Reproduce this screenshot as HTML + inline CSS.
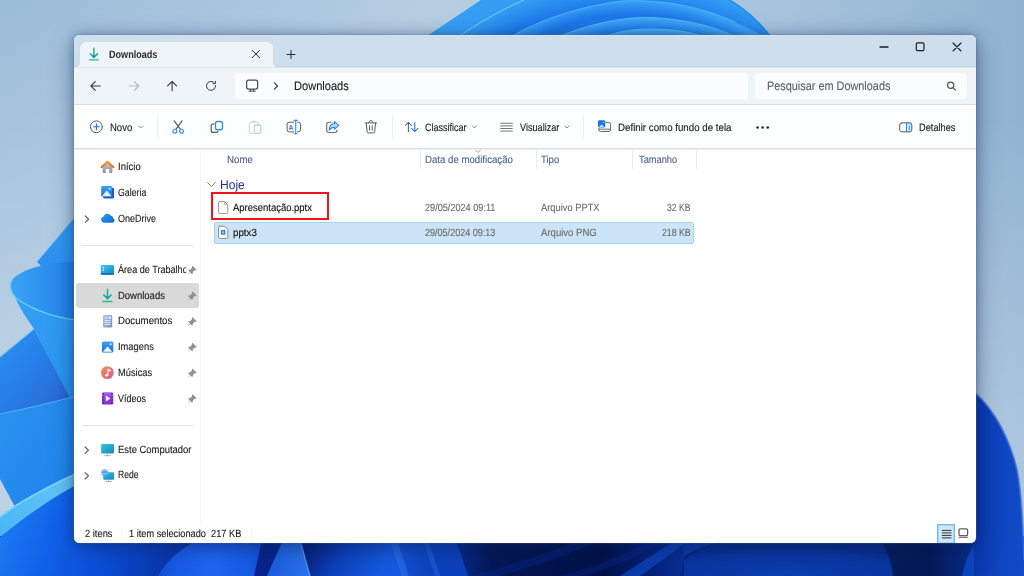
<!DOCTYPE html>
<html lang="pt-BR">
<head>
<meta charset="utf-8">
<title>Downloads</title>
<style>
*{box-sizing:border-box;margin:0;padding:0}
html,body{width:1024px;height:576px;overflow:hidden;background:#a6c3db;font-family:"Liberation Sans",sans-serif;color:#1b1b1b}
#wall{position:absolute;left:0;top:0;width:1024px;height:576px}
#win{position:absolute;left:74px;top:35px;width:902px;height:508px;border-radius:5.5px;background:#fff;overflow:hidden;
 box-shadow:0 0 0 1px rgba(95,110,135,.26),0 7px 26px rgba(15,40,90,.36),0 1px 9px rgba(10,30,80,.28),0 0 16px rgba(20,45,90,.12)}
.a{position:absolute}
.t{position:absolute;white-space:nowrap;line-height:20px;height:20px;-webkit-text-stroke:.11px currentColor;text-rendering:geometricPrecision}
svg.i{position:absolute;overflow:visible}
#titlebar{position:absolute;left:0;top:0;width:902px;height:32px;background:#cedeec;border-top:1px solid #d3e2ef;border-bottom:1px solid #c6d8e8}
#tab{position:absolute;left:6px;top:6.5px;width:193px;height:26px;background:#eff4f9;border-radius:6px 6px 0 0}
#tab:before,#tab:after{content:"";position:absolute;bottom:0.5px;width:4px;height:4px}
#tab:before{left:-4px;background:radial-gradient(circle at 0 0,rgba(239,244,249,0) 3.6px,#eff4f9 4.2px)}
#tab:after{right:-4px;background:radial-gradient(circle at 100% 0,rgba(239,244,249,0) 3.6px,#eff4f9 4.2px)}
#navbar{position:absolute;left:0;top:32px;width:902px;height:38px;background:#eff4f9;border-bottom:1px solid #d5e0ee}
#addr{position:absolute;left:161px;top:38px;width:513px;height:25.5px;background:#fafcfe;border-radius:4px}
#search{position:absolute;left:681px;top:38px;width:212px;height:25.5px;background:#fafcfe;border-radius:4px}
#toolbar{position:absolute;left:0;top:70px;width:902px;height:44px;background:#fdfeff;border-bottom:1px solid #d5dfec;box-shadow:0 1px 0 #e9eff6}
.sep{position:absolute;top:80px;width:1px;height:24px;background:#eff0f3}
.csep{position:absolute;top:115px;width:1px;height:19px;background:#ebebec}
#navdiv{position:absolute;left:126px;top:114px;width:1px;height:376px;background:#f4f5f7}
.hl{position:absolute;left:8px;width:177px;height:1px;background:#e3e3e3}
#navsel{position:absolute;left:2px;top:248px;width:123px;height:25px;background:#d9d9d9;border-radius:3px}
#redbox{position:absolute;left:137px;top:157px;width:118px;height:27.5px;border:2px solid #f5121c}
#rowsel{position:absolute;left:139.5px;top:187px;width:480.5px;height:21.5px;background:#cce4f8;border:1px solid #a6d3f5;border-radius:2px}
.ssep{position:absolute;top:494px;width:1px;height:10px;background:#f3f3f3}
#vbtn{position:absolute;left:863px;top:489px;width:18px;height:20px;background:#cfe8f8;border:1px solid #6fbdec;box-shadow:inset 0 0 0 1px rgba(111,189,236,.45)}
#txt{position:absolute;left:0;top:0;width:902px;height:508px;will-change:transform}
#tline{position:absolute;left:0;top:32px;width:902px;height:1px;background:rgba(190,208,226,.38)}
</style>
</head>
<body>
<svg id="wall" viewBox="0 0 1024 576">
<defs>
<linearGradient id="bg" x1="0" y1="0" x2="1" y2="0"><stop offset="0" stop-color="#9bbcd8"/><stop offset=".2" stop-color="#a6c4dd"/><stop offset=".42" stop-color="#b6cee2"/><stop offset=".75" stop-color="#a7c4dc"/><stop offset="1" stop-color="#90b3d2"/></linearGradient>
<linearGradient id="lt" x1="0" y1="0" x2="0" y2="1"><stop offset="0" stop-color="#fff" stop-opacity="0"/><stop offset=".6" stop-color="#fff" stop-opacity=".3"/><stop offset="1" stop-color="#fff" stop-opacity=".36"/></linearGradient>
<linearGradient id="ltR" x1="0" y1="0" x2="0" y2="1"><stop offset="0" stop-color="#fff" stop-opacity="0"/><stop offset=".2" stop-color="#fff" stop-opacity="0"/><stop offset=".7" stop-color="#fff" stop-opacity=".22"/><stop offset="1" stop-color="#fff" stop-opacity=".3"/></linearGradient>
<linearGradient id="tA" x1="0" y1="0" x2="1" y2="0"><stop offset="0" stop-color="#38a2f4"/><stop offset="1" stop-color="#2388ee"/></linearGradient>
<radialGradient id="tB" gradientUnits="userSpaceOnUse" cx="625" cy="80" r="187" gradientTransform="translate(625,80) scale(1,0.508) translate(-625,-80)"><stop offset="0" stop-color="#1d7ae8"/><stop offset="0.78" stop-color="#1d7ae8"/><stop offset="0.9" stop-color="#2a8ff0"/><stop offset="1" stop-color="#33a0f4"/></radialGradient>
<radialGradient id="tC" gradientUnits="userSpaceOnUse" cx="632" cy="80" r="144" gradientTransform="translate(632,80) scale(1,0.552) translate(-632,-80)"><stop offset="0" stop-color="#1d78e7"/><stop offset="0.83" stop-color="#1d78e7"/><stop offset="0.92" stop-color="#2a8ef0"/><stop offset="1" stop-color="#3da4f6"/></radialGradient>
<radialGradient id="tD" gradientUnits="userSpaceOnUse" cx="645" cy="80" r="119.6" gradientTransform="translate(645,80) scale(1,0.52) translate(-645,-80)"><stop offset="0" stop-color="#1d78e7"/><stop offset="0.79" stop-color="#1d78e7"/><stop offset="0.9" stop-color="#2b90f0"/><stop offset="1" stop-color="#42a8f7"/></radialGradient>
<radialGradient id="tE" gradientUnits="userSpaceOnUse" cx="652" cy="80" r="93" gradientTransform="translate(652,80) scale(1,0.55) translate(-652,-80)"><stop offset="0" stop-color="#1f7ce8"/><stop offset="0.6" stop-color="#1f7ce8"/><stop offset="0.85" stop-color="#2f94f1"/><stop offset="1" stop-color="#48acf7"/></radialGradient>
<linearGradient id="p1" x1="1" y1="0" x2="0" y2="1"><stop offset="0" stop-color="#329cf3"/><stop offset="1" stop-color="#288df0"/></linearGradient>
<linearGradient id="cin" x1="0" y1="0" x2="1" y2="0"><stop offset="0" stop-color="#3ba4f6"/><stop offset="1" stop-color="#1f80e8"/></linearGradient>
<linearGradient id="cout" x1="0" y1="0" x2="1" y2="1"><stop offset="0" stop-color="#33a2f5"/><stop offset="1" stop-color="#2a93f0"/></linearGradient>
<linearGradient id="p3" x1="0" y1="0" x2="1" y2="1"><stop offset="0" stop-color="#2d92f0"/><stop offset=".4" stop-color="#2680ea"/><stop offset=".7" stop-color="#2a70da"/><stop offset="1" stop-color="#1c54be"/></linearGradient>
<linearGradient id="p4" x1="0" y1="0" x2="1" y2="1"><stop offset="0" stop-color="#2a93f0"/><stop offset="1" stop-color="#1e82ea"/></linearGradient>
<linearGradient id="band" x1="0" y1="1" x2="1" y2="0"><stop offset="0" stop-color="#3fb0f4"/><stop offset="1" stop-color="#66c8f7"/></linearGradient>
<linearGradient id="p5" gradientUnits="userSpaceOnUse" x1="0" y1="500" x2="190" y2="576"><stop offset="0" stop-color="#2080f0"/><stop offset=".3" stop-color="#1062ea"/><stop offset=".6" stop-color="#0b4cd6"/><stop offset=".85" stop-color="#0a38b0"/><stop offset="1" stop-color="#0a2f9e"/></linearGradient>
<radialGradient id="b1" gradientUnits="userSpaceOnUse" cx="212" cy="566" r="75"><stop offset="0" stop-color="#1f68f2"/><stop offset=".5" stop-color="#175be6"/><stop offset="1" stop-color="#0b40c6"/></radialGradient>
<linearGradient id="b3" gradientUnits="userSpaceOnUse" x1="312" y1="540" x2="375" y2="580"><stop offset="0" stop-color="#061e78"/><stop offset=".45" stop-color="#0c40bc"/><stop offset="1" stop-color="#155ae2"/></linearGradient>
<linearGradient id="b4" x1="0" y1="0" x2="1" y2="0"><stop offset="0" stop-color="#1a5ce0"/><stop offset="1" stop-color="#2c74ec"/></linearGradient>
<linearGradient id="b2" x1="0" y1="0" x2="1" y2="0"><stop offset="0" stop-color="#1354d6"/><stop offset="1" stop-color="#0c3fba"/></linearGradient>
<linearGradient id="bdark" x1="0" y1="0" x2="1" y2="0"><stop offset="0" stop-color="#072a8c"/><stop offset=".15" stop-color="#031654"/><stop offset=".6" stop-color="#021046"/><stop offset=".85" stop-color="#062584"/><stop offset="1" stop-color="#0a36a8"/></linearGradient>
<radialGradient id="bround" cx=".5" cy=".9" r=".7"><stop offset="0" stop-color="#0b3eb0"/><stop offset=".8" stop-color="#09359f"/><stop offset="1" stop-color="#082c8c"/></radialGradient>
<linearGradient id="bsh" x1="0" y1="0" x2="1" y2="0"><stop offset="0" stop-color="#07267c"/><stop offset=".55" stop-color="#05205c"/><stop offset=".72" stop-color="#041856"/><stop offset=".84" stop-color="#072a84"/><stop offset="1" stop-color="#0a3aae"/></linearGradient>
<linearGradient id="rp" gradientUnits="userSpaceOnUse" x1="974" y1="0" x2="1024" y2="0"><stop offset="0" stop-color="#0a37ab"/><stop offset=".5" stop-color="#0e44c0"/><stop offset="1" stop-color="#114bc8"/></linearGradient>
</defs>
<rect width="1024" height="576" fill="url(#bg)"/>
<rect x="0" y="0" width="430" height="576" fill="url(#lt)"/>
<rect x="770" y="0" width="254" height="576" fill="url(#ltR)"/>
<!-- top bloom -->
<path d="M427,36 L481,0 L731,0 C748,10 762,24 771,36 Z" fill="url(#tA)"/>
<path d="M459,36 C478,24 500,10 524,0 L728,0 C745,10 760,24 769,36 Z" fill="url(#tB)"/>
<path d="M459,36 C478,24 500,10 524,0" fill="none" stroke="#6fd2f8" stroke-width="1"/>
<path d="M512,36 C540,20 580,6 622,1 C660,-1 700,6 735,22 C748,28 758,33 764,36 Z" fill="url(#tC)"/>
<path d="M512,36 C540,20 580,6 622,1 C660,-1 700,6 735,22" fill="none" stroke="#58baf8" stroke-width="1" opacity=".8"/>
<path d="M560,36 C585,26 612,19 640,17.5 C675,17 708,24 735,36 Z" fill="url(#tD)"/>
<path d="M560,36 C585,26 612,19 640,17.5 C675,17 708,24 735,36" fill="none" stroke="#5cbdf8" stroke-width="1" opacity=".75"/>
<path d="M605,36 C620,31 635,29 650,29 C672,29 690,32 702,36 Z" fill="url(#tE)"/>
<path d="M605,36 C620,31 635,29 650,29 C672,29 690,32 702,36" fill="none" stroke="#66c4f9" stroke-width="1" opacity=".7"/>
<!-- left petals -->
<path d="M76,216 L37,262 L76,300 Z" fill="url(#p1)"/>
<path d="M0,357 L34,329 L72,400 L76,396 L76,420 L0,420 Z" fill="url(#p3)"/>
<path d="M0,357 L34,329" fill="none" stroke="#6cc4f8" stroke-width="1.2" opacity=".8"/>
<path d="M76,216 L37,262" fill="none" stroke="#58b6f6" stroke-width="1" opacity=".7"/>
<path d="M11,284 C12,296 20,302 36,310 C52,316 64,319 76,320 L76,400 L70,398 L34,329 C24,314 14,300 11,284 Z" fill="url(#cout)"/>
<path d="M76,262 C50,262 22,268 12,280 C8,287 12,296 20,301 C36,311 58,318 76,320 Z" fill="url(#cin)"/>
<path d="M12,280 C8,287 12,296 20,301 C36,311 58,318 76,320" fill="none" stroke="#62d2f6" stroke-width="1.2"/>
<path d="M0,414 C25,409 50,403 76,396 L76,480 L15,507 L0,479 Z" fill="url(#p4)"/>
<path d="M0,414 C25,409 50,403 76,396" fill="none" stroke="#4fb4f4" stroke-width="1"/>
<path d="M0,516 L15,505 C35,493 55,482 76,473 L76,600 L0,600 Z" fill="url(#band)"/>
<path d="M0,517 L15,506 C35,494 55,483 76,474" fill="none" stroke="#8ad8fb" stroke-width="1.6" opacity=".8"/>
<!-- bottom strip -->
<rect x="0" y="536" width="1024" height="40" fill="#0b3cb8"/>
<path d="M0,537 C25,517 50,499 76,485 L80,540 L210,540 L168,576 L0,576 Z" fill="url(#p5)"/>
<path d="M158,576 C166,562 178,550 198,540 L290,540 L290,576 Z" fill="url(#b1)"/>
<path d="M283,540 L400,540 L410,576 L267,576 Z" fill="url(#b3)"/>
<path d="M262,540 L283,540 L267,576 L254,576 Z" fill="#08248c"/>
<path d="M283,540 L300,540 L310,576 L267,576 Z" fill="url(#b4)"/>
<path d="M300,540 L310,576" stroke="#5ea4f6" stroke-width="1.3" fill="none" opacity=".8"/>
<path d="M392,540 L404,576 L440,576 L428,540 Z" fill="url(#b2)"/>
<path d="M390,540 L402,576 L409,576 L397,540 Z" fill="#3a7cea" opacity=".45"/>
<path d="M423,540 L435,576 L441,576 L429,540 Z" fill="#2c6ae0" opacity=".45"/>
<path d="M428,540 L440,576 L470,576 L458,540 Z" fill="#0c40bc"/>
<path d="M456,540 L468,576 L700,576 L700,540 Z" fill="url(#bdark)"/>
<path d="M470,576 C510,566 550,552 580,540 L600,540 C570,554 530,568 500,576 Z" fill="#0a2f9a" opacity=".32"/>
<path d="M560,576 C600,566 630,552 650,540 L664,540 C644,554 612,568 585,576 Z" fill="#0a2f9a" opacity=".3"/>
<path d="M620,576 L676,540 L690,540 L640,576 Z" fill="#1048c8" opacity=".7"/>
<path d="M690,540 L1024,540 L1024,576 L680,576 Z" fill="url(#bsh)"/>
<path d="M684,560 C700,548 720,542 742,540 L880,540 C888,552 892,564 893,576 L684,576 Z" fill="url(#bround)"/>
<path d="M684,556 C700,546 722,541 742,540 L700,540 L684,546 Z" fill="#0b3aa8"/>
<path d="M962,576 C965,562 970,550 976,540 L1024,540 L1024,576 Z" fill="#0c44c0"/>
<!-- right petal -->
<path d="M974,392 C995,410 1010,440 1017,470 C1021,490 1023,520 1024,576 L974,576 Z" fill="url(#rp)"/>
<path d="M974,392 C995,410 1010,440 1017,470 C1021,490 1023,520 1024,560" fill="none" stroke="#3e72d6" stroke-width="2" opacity=".7"/>
</svg>

<div id="win">
 <div id="titlebar"></div>
 <div id="tab"></div>
 <div id="navbar"></div>
 <div id="tline"></div>
 <div id="addr"></div>
 <div id="search"></div>
 <div id="toolbar"></div>
 <div class="sep" style="left:82.5px"></div>
 <div class="sep" style="left:318px"></div>
 <div class="sep" style="left:509px"></div>
 <div class="csep" style="left:346px"></div>
 <div class="csep" style="left:462px"></div>
 <div class="csep" style="left:558px"></div>
 <div class="csep" style="left:622px"></div>
 <div id="navdiv"></div>
 <div class="hl" style="top:209.5px;width:111px"></div>
 <div class="hl" style="top:389.5px;width:111px"></div>
 <div id="navsel"></div>
 <div id="rowsel"></div>
 <div id="redbox"></div>
 <div class="ssep" style="left:46.5px"></div>
 <div class="ssep" style="left:176.5px"></div>
 <div id="vbtn"></div>
<!--ICONS_BEGIN-->
<svg class="a" style="left:-74px;top:-35px" width="1024" height="576" viewBox="0 0 1024 576" fill="none" stroke-linecap="round" stroke-linejoin="round">
<defs>
<linearGradient id="gdl" x1="0" y1="0" x2="0" y2="1"><stop offset="0" stop-color="#2cc477"/><stop offset="1" stop-color="#1499aa"/></linearGradient>
<linearGradient id="gcy" x1="0" y1="0" x2="1" y2="1"><stop offset="0" stop-color="#3ccaf0"/><stop offset="1" stop-color="#1585c8"/></linearGradient>
<linearGradient id="gmo" x1="0" y1="0" x2="1" y2="1"><stop offset="0" stop-color="#2ec6dc"/><stop offset="1" stop-color="#1a86c4"/></linearGradient>
<linearGradient id="gbl" x1="0" y1="0" x2="0" y2="1"><stop offset="0" stop-color="#3aa2f6"/><stop offset="1" stop-color="#1a6ed8"/></linearGradient>
<linearGradient id="gmu" x1="0" y1="0" x2="1" y2="1"><stop offset="0" stop-color="#f59446"/><stop offset="1" stop-color="#d4569c"/></linearGradient>
<linearGradient id="gvi" x1="0" y1="0" x2="0" y2="1"><stop offset="0" stop-color="#a95af4"/><stop offset="1" stop-color="#7a2fc8"/></linearGradient>
<linearGradient id="gdoc" x1="0" y1="0" x2="1" y2="1"><stop offset="0" stop-color="#b9cbe4"/><stop offset="1" stop-color="#6f8ec0"/></linearGradient>
<linearGradient id="grf" gradientUnits="userSpaceOnUse" x1="0" y1="161" x2="0" y2="168"><stop offset="0" stop-color="#f6a032"/><stop offset="1" stop-color="#e3661f"/></linearGradient>
<linearGradient id="ghm" x1="0" y1="0" x2="0" y2="1"><stop offset="0" stop-color="#cfcfcf"/><stop offset="1" stop-color="#8e8e8e"/></linearGradient>
<linearGradient id="god" x1="0" y1="0" x2="1" y2="1"><stop offset="0" stop-color="#2b9cf2"/><stop offset="1" stop-color="#1468cc"/></linearGradient>
<g id="pin" fill="#89929b" stroke="none"><path d="M4.9,0.2 L8.3,3.6 C8.6,3.9 8.4,4.3 8.1,4.4 L6.4,4.7 L4.9,6.2 L4.6,7.9 C4.5,8.3 4.1,8.4 3.8,8.1 L2.3,6.6 L0.3,8.6 L0,8.3 L2,6.3 L0.4,4.7 C0.1,4.4 0.3,4 0.6,3.9 L2.3,3.6 L3.8,2.1 L4.1,0.5 C4.2,0.1 4.6,-0.1 4.9,0.2 Z"/></g>
<g id="chevr" stroke="#666" stroke-width="1.2"><path d="M0,0 L3.3,3.2 L0,6.4"/></g>
<g id="chevd" stroke="#7a7a7a" stroke-width=".9"><path d="M0,0 L2,2 L4,0"/></g>
</defs>

<!-- title bar -->
<g stroke="url(#gdl)" stroke-width="1.5"><path d="M93.9,48.2 V57 M90.3,53.8 L93.9,57.4 L97.5,53.8"/><path d="M89.6,59.9 H98.3" stroke="#2abf84" stroke-width="1.4"/></g>
<g stroke="#2b2b2b" stroke-width="1"><path d="M252.2,50.3 L259.6,57.7 M259.6,50.3 L252.2,57.7"/><path d="M287,54.5 H295 M291,50.5 V58.5"/></g>
<g stroke="#1f1f1f" stroke-width="1.2"><path d="M880,47 H888" stroke-width="1.3"/><rect x="916.3" y="42.9" width="7.7" height="7.7" rx="1.3"/><path d="M953,43 L961,51 M961,43 L953,51" stroke-width="1.1"/></g>

<!-- nav bar -->
<g stroke="#3a3a3a" stroke-width="1.1"><path d="M91,86 H100.3 M95.3,81.6 L90.9,86 L95.3,90.4"/>
<path d="M172.1,81.4 V90.8 M167.6,85.9 L172.1,81.4 L176.6,85.9"/>
<path d="M215.5,85.6 A4.5,4.5 0 1 1 213.6,82.2 M215.4,81.3 V83.6 H213.1" stroke-width="1"/></g>
<g stroke="#b3b8be" stroke-width="1.1"><path d="M129.2,86 H138.8 M134.4,81.6 L138.8,86 L134.4,90.4"/></g>
<g stroke="#4c4c4c" stroke-width="1.25"><rect x="246.6" y="80.2" width="11" height="8.8" rx="2"/><path d="M249,91.2 H255.2 M250.6,89.4 V91 M253.6,89.4 V91" stroke-width="1"/></g>
<path d="M274.3,82.8 L277.6,86 L274.3,89.2" stroke="#4c4c4c" stroke-width="1.2"/>
<g stroke="#505050" stroke-width="1.2"><circle cx="950.7" cy="85.3" r="3.1"/><path d="M953,87.7 L955.5,90.2"/></g>

<!-- toolbar -->
<circle cx="96.4" cy="126.8" r="5.9" stroke="#5c5c5c" stroke-width="1"/><path d="M93.4,126.8 H99.4 M96.4,123.8 V129.8" stroke="#1a73d8" stroke-width="1.1"/>
<use href="#chevd" x="138.6" y="126"/>
<g stroke-width="1.15"><path d="M174.2,120.8 L180.5,129.3 M182.1,120.8 L175.8,129.3" stroke="#555"/><circle cx="174.8" cy="131.2" r="1.95" stroke="#3690e2"/><circle cx="181.5" cy="131.2" r="1.95" stroke="#3690e2"/></g>
<g stroke-width="1.15"><path d="M214.2,124 H213.2 A2,2 0 0 0 211.2,126 V130.4 A2,2 0 0 0 213.2,132.4 H216.2 A2,2 0 0 0 218,131.2" stroke="#555"/><rect x="215.5" y="121.5" width="7" height="8.3" rx="2" stroke="#3690e2" stroke-width="1.4"/></g>
<g stroke-width="1"><path d="M253.5,133.4 H251 A1.6,1.6 0 0 1 249.4,131.8 V123.8 A1.6,1.6 0 0 1 251,122.2 H257 A1.6,1.6 0 0 1 258.6,123.8 V124.6 M252.2,122.2 A1.8,1.4 0 0 1 255.8,122.2" stroke="#d2d2d2"/><rect x="254.4" y="125" width="6.4" height="8.4" rx="1.6" stroke="#aed4f6" stroke-width="1.3" fill="#fff"/></g>
<g stroke-width="1"><path d="M293.6,122.2 H289.4 A2.3,2.3 0 0 0 287.1,124.5 V129.6 A2.3,2.3 0 0 0 289.4,131.9 H293.6 M297.6,122.2 H298.3 A2.3,2.3 0 0 1 300.6,124.5 V129.6 A2.3,2.3 0 0 1 298.3,131.9 H297.6" stroke="#5c5c5c"/><path d="M295.7,120.6 V133.4 M294.1,120.3 H297.3 M294.1,133.7 H297.3" stroke="#3690e2" stroke-width="1.15"/></g>
<text x="288.6" y="129.7" font-family="Liberation Sans, sans-serif" font-size="6.6" font-weight="700" fill="#2a7fe0" stroke="none">A</text>
<g stroke-width="1.1"><path d="M330.8,122.3 H328.9 A2.2,2.2 0 0 0 326.7,124.5 V130.3 A2.2,2.2 0 0 0 328.9,132.5 H334.8 A2.2,2.2 0 0 0 337,130.3 V130" stroke="#6a6a6a"/><path d="M334.5,121.6 L338.7,125.4 L334.5,129.2 V127.3 C332.2,127.3 330.5,128.3 329.2,130.2 C329.2,126.2 331.4,123.6 334.5,123.4 Z" stroke="#2583dc" stroke-width="1.05" fill="#2583dc" fill-opacity=".3"/></g>
<g stroke="#5c5c5c" stroke-width="1"><path d="M365.1,122.9 H376.7 M368.9,122.7 A2,2.2 0 0 1 372.9,122.7 M366.3,123.2 L367.1,131.6 A1.3,1.3 0 0 0 368.4,132.9 H373.4 A1.3,1.3 0 0 0 374.7,131.6 L375.5,123.2 M369.6,125.8 V130.2 M372.2,125.8 V130.2"/></g>
<g stroke-width="1.05"><path d="M408.4,122.4 V131.4 M405.3,125.5 L408.4,122.4 L411.5,125.5" stroke="#5c5c5c"/><path d="M414.8,122.4 V131.5 M411.7,128.4 L414.8,131.5 L417.9,128.4" stroke="#1a73d8"/></g>
<use href="#chevd" x="472.4" y="126"/>
<path d="M500.3,123.3 H512.7 M500.3,125.9 H512.7 M500.3,128.5 H512.7 M500.3,131.1 H512.7" stroke="#5c5c5c" stroke-width=".85" stroke-linecap="butt"/>
<use href="#chevd" x="565" y="126"/>
<g><path d="M606,122.6 H608.8 A1.8,1.8 0 0 1 610.6,124.4 V129.7 A1.8,1.8 0 0 1 608.8,131.5 H600.6 A1.8,1.8 0 0 1 598.8,129.7 V128.2 M599.2,129.2 H610.4" stroke="#666" stroke-width="1"/><rect x="598" y="120.3" width="7.3" height="7.2" rx="1.4" fill="#1a76e8"/><path d="M599,127 L601.6,124.4 L604.2,127 Z" fill="#d6e8fb"/><circle cx="603.4" cy="122.3" r=".65" fill="#d6e8fb"/></g>
<g fill="#222"><circle cx="757.5" cy="127.4" r="1.25"/><circle cx="762.6" cy="127.4" r="1.25"/><circle cx="767.7" cy="127.4" r="1.25"/></g>
<g stroke-width="1"><rect x="899.7" y="122.9" width="12" height="8.9" rx="2.1" stroke="#5c5c5c"/><path d="M906.9,123 H909.6 A2.1,2.1 0 0 1 911.7,125.1 V129.6 A2.1,2.1 0 0 1 909.6,131.7 H906.9 Z" fill="#dbeafb" stroke="#2583dc"/><path d="M909.3,126.6 V129.6" stroke="#2583dc" stroke-width=".9"/><circle cx="909.3" cy="125" r=".5" fill="#2583dc"/></g>

<!-- list header sort chevron / group chevron -->
<path d="M475.7,150.4 L478,152.4 L480.3,150.4" stroke="#8a8a8a" stroke-width=".8"/>
<path d="M207.7,182.6 L211.5,186.5 L215.3,182.6" stroke="#7a7a7a" stroke-width="1"/>

<!-- file icons -->
<g stroke="#8c8c8c" stroke-width=".9"><path d="M219.6,201.6 H224.6 L227.8,204.8 V212.4 A1,1 0 0 1 226.8,213.4 H219.6 A1,1 0 0 1 218.6,212.4 V202.6 A1,1 0 0 1 219.6,201.6 Z" fill="#fff"/><path d="M224.6,201.8 V204.8 H227.6" stroke-width=".7"/></g>
<g stroke="#7d8288" stroke-width=".9"><path d="M219.6,226.2 H224.6 L227.8,229.4 V237.4 A1,1 0 0 1 226.8,238.4 H219.6 A1,1 0 0 1 218.6,237.4 V227.2 A1,1 0 0 1 219.6,226.2 Z" fill="#fdfdfd"/><rect x="220.9" y="230.1" width="4.6" height="4.6" rx=".8" fill="#2d7fe4" stroke="none"/><rect x="222.1" y="231.2" width="2.2" height="2.2" rx=".4" fill="#9cc8f6" stroke="none"/></g>

<!-- nav icons -->
<g><path d="M102.6,166.4 L107.5,162.2 L112.4,166.4 V172.1 A.8,.8 0 0 1 111.6,172.9 H109.3 V168.9 H105.7 V172.9 H103.4 A.8,.8 0 0 1 102.6,172.1 Z" fill="url(#ghm)"/><path d="M101.7,167 L107.5,161.9 L113.3,167" stroke="url(#grf)" stroke-width="2.1" stroke-linecap="round"/></g>
<g><rect x="103.2" y="187.8" width="10.8" height="10.8" rx="1.4" fill="#1a5fbf"/><rect x="101.2" y="186" width="10.8" height="10.8" rx="1.4" fill="url(#gbl)"/><path d="M101.8,196.2 L106.3,190.9 Q106.8,190.4 107.3,190.9 L111.6,196.2 Z" fill="#e2effd"/><circle cx="109.5" cy="188.8" r=".9" fill="#eaf4ff"/></g>
<path d="M104,222.7 A3.2,3.2 0 0 1 103.6,216.4 A3.9,3.9 0 0 1 110.6,215.6 A3.1,3.1 0 0 1 113.3,218.2 A2.4,2.4 0 0 1 111.9,222.7 Z" fill="url(#god)"/>
<use href="#chevr" x="85.3" y="216"/>
<g><rect x="100.8" y="265" width="13.2" height="9.7" rx="1.2" fill="url(#gcy)"/><rect x="100.8" y="272.9" width="13.2" height="1.8" rx=".8" fill="#1472b4"/><circle cx="103.4" cy="267.8" r=".7" fill="#fff"/><circle cx="103.4" cy="270.3" r=".7" fill="#fff"/></g>
<g stroke="url(#gdl)" stroke-width="1.65"><path d="M107.5,289.2 V298.2 M103.9,295 L107.5,298.6 L111.1,295"/><path d="M103.2,301.4 H111.8" stroke="#2abf84" stroke-width="1.5"/></g>
<g><path d="M104,315 H111.2 A1,1 0 0 1 112.2,316 V326.5 A1,1 0 0 1 111.2,327.5 H104 A1,1 0 0 1 103,326.5 V316 A1,1 0 0 1 104,315 Z" fill="url(#gdoc)"/><path d="M104.6,318 H108 M104.6,320.6 H110.6 M104.6,322.6 H110.6 M104.6,324.6 H110.6" stroke="#f2f6fc" stroke-width=".8" stroke-linecap="butt"/><rect x="108.8" y="316.8" width="2" height="2" fill="#f2f6fc"/></g>
<g><rect x="101.9" y="341.4" width="11.4" height="11.2" rx="1.5" fill="url(#gbl)"/><path d="M102.9,351.8 L107.1,346.9 Q107.6,346.4 108.1,346.9 L112.3,351.8 Z" fill="#f2f8ff"/><circle cx="110.6" cy="344.2" r=".95" fill="#f2f8ff"/></g>
<g><circle cx="107.3" cy="372.6" r="6.4" fill="url(#gmu)"/><path d="M107.9,375 V369 L110.2,369.8 V371.2 L108.7,370.7" stroke="#fff" stroke-width=".9"/><ellipse cx="106.7" cy="375.2" rx="1.5" ry="1.2" fill="#fff"/></g>
<g><rect x="101.9" y="392.2" width="11.4" height="12.4" rx="1.5" fill="url(#gvi)"/><path d="M105.8,395.4 L110.4,398.4 L105.8,401.4 Z" fill="#f6eeff"/><g fill="#3a1470"><rect x="102.7" y="393.4" width="1.2" height="1.2"/><rect x="102.7" y="396.4" width="1.2" height="1.2"/><rect x="102.7" y="399.4" width="1.2" height="1.2"/><rect x="102.7" y="402.4" width="1.2" height="1.2"/><rect x="111.3" y="393.4" width="1.2" height="1.2"/><rect x="111.3" y="396.4" width="1.2" height="1.2"/><rect x="111.3" y="399.4" width="1.2" height="1.2"/><rect x="111.3" y="402.4" width="1.2" height="1.2"/></g></g>
<g><rect x="101.1" y="444" width="12.9" height="9.6" rx="1.1" fill="url(#gmo)"/><path d="M107.5,453.6 V455.4 M104.6,455.7 H110.4" stroke="#9aa6b0" stroke-width=".9"/></g>
<use href="#chevr" x="85.1" y="447"/>
<g><rect x="103.2" y="472.2" width="10.8" height="7.6" rx="1" fill="url(#gmo)"/><path d="M108.6,479.8 V481.2 M105.8,481.5 H111.4" stroke="#9aa6b0" stroke-width=".9"/><circle cx="104.6" cy="472.6" r="3.3" fill="#4ea6ee"/><path d="M102.4,471 Q104.5,469.6 106.4,470.6 M102,473.4 Q104.6,474.6 107.4,473.4" stroke="#bfe0fa" stroke-width=".7"/></g>
<use href="#chevr" x="85.1" y="472.6"/>
<use href="#pin" x="188" y="265.9"/><use href="#pin" x="188" y="291.6"/><use href="#pin" x="188" y="317.3"/><use href="#pin" x="188" y="343"/><use href="#pin" x="188" y="368.7"/><use href="#pin" x="188" y="394.4"/>

<!-- status view buttons -->
<path d="M941.8,530.4 H951.5 M941.8,532.9 H951.5 M941.8,535.4 H951.5 M941.8,537.9 H951.5" stroke="#333" stroke-width="1" stroke-linecap="butt"/>
<rect x="959" y="528.8" width="8.6" height="6.8" rx="1.2" stroke="#5e5e5e" stroke-width="1.3"/><path d="M958.8,537.4 H967.8" stroke="#777" stroke-width="1.3" stroke-linecap="butt"/>
</svg>
<!--ICONS_END-->
<div id="txt">
<span class="t" id="t0" style="left:34.60px;top:11.00px;font-size:9.8px;font-weight:700;color:#2a2a2a;transform-origin:0 12.00px;transform:scale(0.9260,1.09);-webkit-text-stroke:0;">Downloads</span>
<span class="t" id="t1" style="left:220.20px;top:42.00px;font-size:11.4px;font-weight:400;color:#1b1b1b;transform-origin:0 13.00px;transform:scale(0.9723,1.09);">Downloads</span>
<span class="t" id="t2" style="left:692.90px;top:42.00px;font-size:11.4px;font-weight:400;color:#5d6166;transform-origin:0 13.00px;transform:scale(0.9553,1.09);">Pesquisar em Downloads</span>
<span class="t" id="t3" style="left:36.40px;top:84.00px;font-size:9.8px;font-weight:400;color:#1b1b1b;transform-origin:0 12.00px;transform:scale(0.9705,1.09);">Novo</span>
<span class="t" id="t4" style="left:351.00px;top:84.00px;font-size:9.8px;font-weight:400;color:#1b1b1b;transform-origin:0 12.00px;transform:scale(0.9184,1.09);">Classificar</span>
<span class="t" id="t5" style="left:445.80px;top:84.00px;font-size:9.8px;font-weight:400;color:#1b1b1b;transform-origin:0 12.00px;transform:scale(0.9315,1.09);">Visualizar</span>
<span class="t" id="t6" style="left:543.80px;top:84.00px;font-size:9.8px;font-weight:400;color:#1b1b1b;transform-origin:0 12.00px;transform:scale(0.9923,1.09);">Definir como fundo de tela</span>
<span class="t" id="t7" style="left:844.70px;top:84.00px;font-size:9.8px;font-weight:400;color:#1b1b1b;transform-origin:0 12.00px;transform:scale(0.9438,1.09);">Detalhes</span>
<span class="t" id="t8" style="left:152.90px;top:116.00px;font-size:9.6px;font-weight:400;color:#4d6689;transform-origin:0 12.00px;transform:scale(1.0120,1.09);">Nome</span>
<span class="t" id="t9" style="left:351.20px;top:116.00px;font-size:9.6px;font-weight:400;color:#4d6689;transform-origin:0 12.00px;transform:scale(1.0049,1.09);">Data de modificação</span>
<span class="t" id="t10" style="left:467.30px;top:116.00px;font-size:9.6px;font-weight:400;color:#4d6689;transform-origin:0 12.00px;transform:scale(0.9939,1.09);">Tipo</span>
<span class="t" id="t11" style="left:564.60px;top:116.00px;font-size:9.6px;font-weight:400;color:#4d6689;transform-origin:0 12.00px;transform:scale(0.9653,1.09);">Tamanho</span>
<span class="t" id="t12" style="left:145.80px;top:141.00px;font-size:11.6px;font-weight:400;color:#1e3287;transform-origin:0 13.00px;transform:scale(1.0394,1.09);-webkit-text-stroke:0;">Hoje</span>
<span class="t" id="t13" style="left:159.00px;top:164.00px;font-size:9.6px;font-weight:400;color:#111;transform-origin:0 12.00px;transform:scale(0.9873,1.09);">Apresentação.pptx</span>
<span class="t" id="t14" style="left:159.00px;top:189.00px;font-size:9.6px;font-weight:400;color:#111;transform-origin:0 12.00px;transform:scale(1.0134,1.09);">pptx3</span>
<span class="t" id="t15" style="left:351.20px;top:164.00px;font-size:9.6px;font-weight:400;color:#6b6b6b;transform-origin:0 12.00px;transform:scale(0.9516,1.09);">29/05/2024 09:11</span>
<span class="t" id="t16" style="left:351.20px;top:189.00px;font-size:9.6px;font-weight:400;color:#6b6b6b;transform-origin:0 12.00px;transform:scale(0.9424,1.09);">29/05/2024 09:13</span>
<span class="t" id="t17" style="left:466.70px;top:164.00px;font-size:9.6px;font-weight:400;color:#6b6b6b;transform-origin:0 12.00px;transform:scale(0.9724,1.09);">Arquivo PPTX</span>
<span class="t" id="t18" style="left:466.70px;top:189.00px;font-size:9.6px;font-weight:400;color:#6b6b6b;transform-origin:0 12.00px;transform:scale(0.9967,1.09);">Arquivo PNG</span>
<span class="t" id="t19" style="left:593.30px;top:164.00px;font-size:9.6px;font-weight:400;color:#6b6b6b;transform-origin:0 12.00px;transform:scale(0.8952,1.09);">32 KB</span>
<span class="t" id="t20" style="left:588.00px;top:189.00px;font-size:9.6px;font-weight:400;color:#6b6b6b;transform-origin:0 12.00px;transform:scale(0.9116,1.09);">218 KB</span>
<span class="t" id="t21" style="left:44.10px;top:123.00px;font-size:9.6px;font-weight:400;color:#1b1b1b;transform-origin:0 12.00px;transform:scale(0.9940,1.09);">Início</span>
<span class="t" id="t22" style="left:44.10px;top:149.00px;font-size:9.6px;font-weight:400;color:#1b1b1b;transform-origin:0 12.00px;transform:scale(0.9147,1.09);">Galeria</span>
<span class="t" id="t23" style="left:44.10px;top:175.00px;font-size:9.6px;font-weight:400;color:#1b1b1b;transform-origin:0 12.00px;transform:scale(0.9400,1.09);">OneDrive</span>
<span class="t" id="t24" style="left:44.10px;top:252.00px;font-size:9.6px;font-weight:400;color:#1b1b1b;transform-origin:0 12.00px;transform:scale(0.9880,1.09);">Downloads</span>
<span class="t" id="t25" style="left:44.10px;top:277.00px;font-size:9.6px;font-weight:400;color:#1b1b1b;transform-origin:0 12.00px;transform:scale(1.0082,1.09);">Documentos</span>
<span class="t" id="t26" style="left:44.10px;top:303.00px;font-size:9.6px;font-weight:400;color:#1b1b1b;transform-origin:0 12.00px;transform:scale(0.9729,1.09);">Imagens</span>
<span class="t" id="t27" style="left:44.10px;top:329.00px;font-size:9.6px;font-weight:400;color:#1b1b1b;transform-origin:0 12.00px;transform:scale(0.9691,1.09);">Músicas</span>
<span class="t" id="t28" style="left:44.10px;top:355.00px;font-size:9.6px;font-weight:400;color:#1b1b1b;transform-origin:0 12.00px;transform:scale(0.9339,1.09);">Vídeos</span>
<span class="t" id="t29" style="left:44.10px;top:406.00px;font-size:9.6px;font-weight:400;color:#1b1b1b;transform-origin:0 12.00px;transform:scale(0.9845,1.09);">Este Computador</span>
<span class="t" id="t30" style="left:44.10px;top:431.00px;font-size:9.6px;font-weight:400;color:#1b1b1b;transform-origin:0 12.00px;transform:scale(0.8937,1.09);">Rede</span>
<span class="t" id="t31" style="left:44.10px;top:226.00px;font-size:9.6px;font-weight:400;color:#1b1b1b;transform-origin:0 12.00px;transform:scale(0.9469,1.09);width:72.1px;overflow:hidden;">Área de Trabalho</span>
<span class="t" id="t32" style="left:10.90px;top:490.00px;font-size:9.6px;font-weight:400;color:#1b1b1b;transform-origin:0 12.00px;transform:scale(0.9724,1.09);">2 itens</span>
<span class="t" id="t33" style="left:55.40px;top:490.00px;font-size:9.6px;font-weight:400;color:#1b1b1b;transform-origin:0 12.00px;transform:scale(0.9614,1.09);white-space:pre;">1 item selecionado  217 KB</span>
</div>

</div>
</body>
</html>
